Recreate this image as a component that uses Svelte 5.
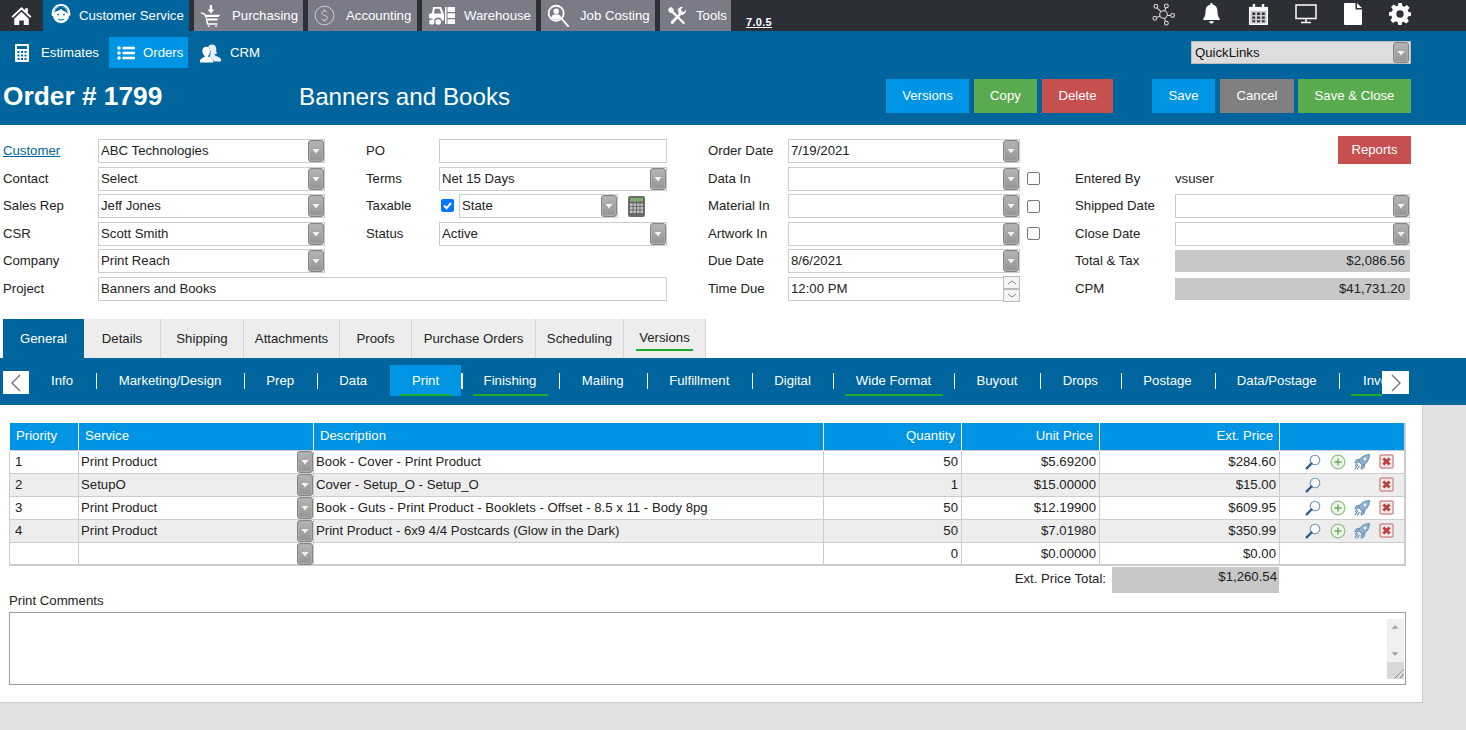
<script>
  const tabs = [
    { label: 'Purchasing', icon: 'cart', w: 109, iw: 32 },
    { label: 'Accounting', icon: 'dollar', w: 109, iw: 32 },
    { label: 'Warehouse', icon: 'fork', w: 114, iw: 36 },
    { label: 'Job Costing', icon: 'job', w: 114, iw: 33 },
    { label: 'Tools', icon: 'tools', w: 71, iw: 30 }
  ];
  const detailTabs = [
    { label: 'General', w: 81, active: true },
    { label: 'Details', w: 77 },
    { label: 'Shipping', w: 83 },
    { label: 'Attachments', w: 96 },
    { label: 'Proofs', w: 72 },
    { label: 'Purchase Orders', w: 124 },
    { label: 'Scheduling', w: 88 },
    { label: 'Versions', w: 82, mark: true }
  ];
  const subTabs = [
    { label: 'Info', w: 68 },
    { label: 'Marketing/Design', w: 148 },
    { label: 'Prep', w: 72.5 },
    { label: 'Data', w: 73.5 },
    { label: 'Print', w: 71, active: true, mark: true },
    { label: 'Finishing', w: 98, mark: true },
    { label: 'Mailing', w: 87.5 },
    { label: 'Fulfillment', w: 105.5 },
    { label: 'Digital', w: 81 },
    { label: 'Wide Format', w: 121, mark: true },
    { label: 'Buyout', w: 86 },
    { label: 'Drops', w: 80.5 },
    { label: 'Postage', w: 94 },
    { label: 'Data/Postage', w: 124.5 },
    { label: 'Invoice', w: 90, mark: true }
  ];
  const lines = [
    { p: '1', s: 'Print Product', d: 'Book - Cover - Print Product', q: '50', u: '$5.69200', e: '$284.60', add: true },
    { p: '2', s: 'SetupO', d: 'Cover - Setup_O - Setup_O', q: '1', u: '$15.00000', e: '$15.00', add: false },
    { p: '3', s: 'Print Product', d: 'Book - Guts - Print Product - Booklets - Offset - 8.5 x 11 - Body 8pg', q: '50', u: '$12.19900', e: '$609.95', add: true },
    { p: '4', s: 'Print Product', d: 'Print Product - 6x9 4/4 Postcards (Glow in the Dark)', q: '50', u: '$7.01980', e: '$350.99', add: true }
  ];
</script>

{#snippet arrow()}
  <span class="drop"><svg viewBox="0 0 8 6" width="8" height="6"><path d="M0.5 1h7L4 5.500z" fill="#f2f2f2" /></svg></span>
{/snippet}

{#snippet select(value, extra = '')}
  <div class="field {extra}"><span class="val">{value}</span>{@render arrow()}</div>
{/snippet}

{#snippet navIcon(name)}
  {#if name === 'cart'}
    <svg viewBox="0 0 24 24" width="22" height="22" fill="#fff"><path d="M10.700 0h2.400v5h2.600l-3.800 4.200L8.200 5h2.500z" /><path d="M1 8l3.600.6L6 10.500h16l-1.600 2.700H7l.5 1.400h12.200l-1.200 2.200H8.200L9 20h10v1.600H7.500L5.900 13 3.800 10 1 9.500z" /><circle cx="9.500" cy="23" r="1" /><circle cx="17.500" cy="23" r="1" /></svg>
  {:else if name === 'dollar'}
    <svg viewBox="0 0 22 22" width="21" height="21" fill="none" stroke="#ddd" stroke-width=".9"><circle cx="11" cy="11" r="9.800" /><path d="M14 7.600c-.8-1-1.800-1.400-3-1.400-1.700 0-3 .9-3 2.300 0 3.200 6.200 1.700 6.200 5 0 1.400-1.400 2.300-3.200 2.300-1.300 0-2.500-.5-3.200-1.500M11 4.500v1.700M11 15.800v1.700" /></svg>
  {:else if name === 'fork'}
    <svg viewBox="0 0 28 20" width="28" height="20" fill="#fff"><path d="M5 1h8l3 7v6.500h-2a4 4 0 0 0-7.800 0H5.500a3.500 3.500 0 0 0-4.500-2V8l3-1zm1.800 1.800L6 7.500h7.500l-2-4.700z" fill-rule="evenodd" /><circle cx="3.800" cy="16" r="2.600" /><circle cx="10.200" cy="16" r="2.800" /><path d="M17 1h1.500v17H17zM19.500 1H27v5h-7.500zm0 6.300H27V12h-7.500zm0 6H27V18h-7.500z" /></svg>
  {:else if name === 'job'}
    <svg viewBox="0 0 24 26" width="22" height="24"><circle cx="10" cy="10" r="8.200" fill="none" stroke="#fff" stroke-width="2" /><circle cx="10" cy="7.800" r="3" fill="#fff" /><path d="M4.500 15c.5-3 2.500-4 5.500-4s5 1 5.500 4c-1.500 1.500-3.500 2-5.500 2s-4-.5-5.500-2z" fill="#fff" /><path d="M16 16l7 8" stroke="#fff" stroke-width="2" stroke-linecap="round" /></svg>
  {:else}
    <svg viewBox="0 0 24 24" width="21" height="21" fill="#fff"><path d="M2 5.500 5.500 2 9 5l-.6 1.800 13 13.200c.8.800-.8 2.600-1.700 1.700L6.500 8.800 4.700 9.200z" /><path d="M13 6c1-2.500 4-4.500 6.500-4L17 5l1 2.500 2.500.5 2.500-2.500c.3 3-2.500 6.500-6 6l-9 9.800c-1.200 1.200-3.600-1-2.300-2.400l9-9c-.6-1-1-2-.7-3.900z" /></svg>
  {/if}
{/snippet}

{#snippet check()}
  <span class="tick"></span>
{/snippet}

<div class="page">
  <div class="top">
    <div class="home">
      <svg viewBox="0 0 24 22" width="23" height="20" fill="#fff"><path d="M12 1 1 11.500l1.500 1.500L12 4l9.500 9 1.500-1.500-4-3.800V2.500h-3v2.300z" /><path d="M4 14l8-7.600 8 7.600v7h-5.500v-5h-5v5H4z" /></svg>
    </div>
    <div class="tab current">
      <svg class="ico" viewBox="0 0 24 24" width="22" height="22"><circle cx="12" cy="12" r="9" fill="#fff" /><path d="M3 13C1.500 5.500 7 1 12 1s10.500 4.500 9 12" fill="none" stroke="#fff" stroke-width="2" /><path d="M4.500 11C5 7 9 8.500 12 5.500 14 8 18 8 19.500 11 19 4 14 3 12 3S5 4 4.500 11z" fill="#00659c" /><circle cx="8.800" cy="11.500" r="1" fill="#00659c" /><circle cx="15.200" cy="11.500" r="1" fill="#00659c" /><path d="M9 16.500c2 1.300 4 1.300 6 0" stroke="#00659c" stroke-width="1.300" fill="none" /></svg>
      <span>Customer Service</span>
    </div>
    {#each tabs as t}
      <div class="tab" style="width: {t.w}px">
        <span class="ico-wrap" style="width: {t.iw}px">{@render navIcon(t.icon)}</span>
        <span>{t.label}</span>
      </div>
    {/each}
    <span class="version">7.0.5</span>
    <div class="top-right">
      <svg viewBox="0 0 24 24" width="23" height="23" fill="none" stroke="#ddd" stroke-width="1.100"><circle cx="12" cy="12" r="4" /><circle cx="4" cy="3.500" r="2" /><circle cx="15" cy="3" r="2" /><circle cx="3" cy="16" r="2" /><circle cx="15" cy="21" r="2" /><circle cx="21.500" cy="13" r="2" /><path d="M5.300 5l4 4M14.500 5l-1.300 3.200M4.700 15l4-1.500M14 19l-1-3.200M19.500 13H16" /></svg>
      <svg viewBox="0 0 20 24" width="19" height="22" fill="#fff"><path d="M10 0c1 0 1.600.8 1.600 1.800 3.400.8 4.900 3.400 4.900 7 0 5 1.200 7 2.500 8.400v1.300H1v-1.300C2.300 15.800 3.500 13.800 3.500 8.800c0-3.600 1.500-6.200 4.900-7C8.400.8 9 0 10 0zM7.500 20h5c-.2 1.600-1.200 2.400-2.500 2.400S7.700 21.600 7.500 20z" /></svg>
      <svg viewBox="0 0 22 24" width="21" height="23"><path d="M1 4h20v19H1z" fill="#fff" /><path d="M5 1h2.500v5H5zM14.500 1H17v5h-2.500z" fill="#fff" /><path d="M2.500 8h17v13.500h-17z" fill="#2d2f36" opacity=".25" /><g fill="#2d2f36"><path d="M4.500 10h3v2.500h-3zM9.500 10h3v2.500h-3zM14.500 10h3v2.500h-3zM4.500 14h3v2.500h-3zM9.500 14h3v2.500h-3zM14.500 14h3v2.500h-3zM4.500 18h3v2h-3zM9.500 18h3v2h-3zM14.500 18h3v2h-3z" /></g></svg>
      <svg viewBox="0 0 22 20" width="22" height="20" fill="none" stroke="#fff"><path d="M1 1h20v13.500H1z" stroke-width="1.500" /><path d="M11 15v3M6 18.500h10" stroke-width="1.500" /></svg>
      <svg viewBox="0 0 18 22" width="18" height="22" fill="#fff"><path d="M1 0h10.500v6.500H18V21a1 1 0 0 1-1 1H1a1 1 0 0 1-1-1V1a1 1 0 0 1 1-1zM13 0l5 5h-5z" /></svg>
      <svg viewBox="0 0 24 24" width="22" height="22" fill="#fff"><path fill-rule="evenodd" d="M10 0h4l.6 3.300 2.200.9 2.800-1.900 2.800 2.800-1.900 2.800.9 2.200L24 10v4l-3.300.6-.9 2.200 1.900 2.800-2.800 2.800-2.800-1.900-2.200.9L14 24h-4l-.6-3.300-2.200-.9-2.800 1.900-2.800-2.800 1.900-2.800-.9-2.200L0 14v-4l3.300-.6.9-2.200-1.900-2.800 2.800-2.800 2.800 1.900 2.200-.9zM12 8a4 4 0 1 0 0 8 4 4 0 0 0 0-8z" /></svg>
    </div>
  </div>

  <div class="head">
    <div class="subnav">
      <div class="sub" style="width: 94px">
        <svg viewBox="0 0 14 18" width="14" height="18"><path d="M1 0h12a1 1 0 0 1 1 1v16a1 1 0 0 1-1 1H1a1 1 0 0 1-1-1V1a1 1 0 0 1 1-1z" fill="#fff" /><path d="M2 2h10v3H2z" fill="#00659c" /><g fill="#00659c"><path d="M2.500 7h2v2h-2zM6 7h2v2H6zM9.500 7h2v2h-2zM2.500 10.500h2v2h-2zM6 10.500h2v2H6zM9.500 10.500h2v2h-2zM2.500 14h2v2h-2zM6 14h2v2H6zM9.500 14h2v2h-2z" /></g></svg>
        <span>Estimates</span>
      </div>
      <div class="sub on">
        <svg viewBox="0 0 18 14" width="18" height="14" fill="#fff"><circle cx="2" cy="2" r="1.800" /><circle cx="2" cy="7" r="1.800" /><circle cx="2" cy="12" r="1.800" /><path d="M5.500.7H18v2.600H5.500zM5.500 5.700H18v2.600H5.500zM5.500 10.700H18v2.600H5.500z" /></svg>
        <span>Orders</span>
      </div>
      <div class="sub crm">
        <svg viewBox="0 0 22 19" width="21" height="19" fill="#fff"><path d="M12.500 0c3 0 4.500 2 4.500 5 0 1.500 0 3 1 4.500-1 .6-2 .8-2.800.8.200.800.500 1.200 1.300 1.600 2.500 1 4.500 2 5.500 3.500V18h-7c-.5-2-3-3.500-5.500-4.500.8-1 1.300-2.500 1.500-4 .3-2.500-.3-5-2.500-6.500C9 1 10.500 0 12.500 0z" opacity=".9" /><path d="M6.500 2.500c2.700 0 4 2 4 4.500 0 2-.8 4-2 5v1c2.500 1 4.500 2 5.500 3.500V19H0v-2.500C1 15 3 14 5 13v-1C3.500 11 2.500 9 2.500 7c0-2.500 1.300-4.500 4-4.500z" /></svg>
        <span>CRM</span>
      </div>
      <div class="quick"><span>QuickLinks</span>{@render arrow()}</div>
    </div>
    <div class="titlebar">
      <h1>Order # 1799</h1>
      <h2>Banners and Books</h2>
      <div class="btns">
        <button class="b blue" style="width: 83px">Versions</button>
        <button class="b green" style="width: 63px">Copy</button>
        <button class="b red" style="width: 71px">Delete</button>
        <button class="b blue" style="width: 63px; margin-left: 34px">Save</button>
        <button class="b gray" style="width: 74px; margin-right: -1px">Cancel</button>
        <button class="b green" style="width: 113px">Save &amp; Close</button>
      </div>
    </div>
  </div>

  <div class="form">
    <a class="lbl link" href="#top">Customer</a>
    {@render select('ABC Technologies')}
    <span class="lbl g1">PO</span>
    <div class="field"></div>
    <span class="lbl g1">Order Date</span>
    {@render select('7/19/2021')}
    <div class="reports"><button class="b red rep">Reports</button></div>

    <span class="lbl">Contact</span>
    {@render select('Select')}
    <span class="lbl g1">Terms</span>
    {@render select('Net 15 Days')}
    <span class="lbl g1">Data In</span>
    <div class="with-check">{@render select('')}{@render check()}</div>
    <span class="lbl g2">Entered By</span>
    <span class="plain">vsuser</span>

    <span class="lbl">Sales Rep</span>
    {@render select('Jeff Jones')}
    <span class="lbl g1">Taxable</span>
    <div class="taxable">
      <span class="checked"><svg viewBox="0 0 13 13" width="13" height="13"><path d="M3 6.500l2.500 2.700L10 4" fill="none" stroke="#fff" stroke-width="2" /></svg></span>
      {@render select('State')}
      <svg class="calc" viewBox="0 0 17 21" width="17" height="21"><rect width="17" height="21" rx="2" fill="#6a6a6a" /><rect x="2" y="2" width="13" height="3.500" fill="#7fb069" /><g fill="#c4c4c4"><path d="M2 7.500h2.500v2.500H2zM5.500 7.500H8v2.500H5.500zM9 7.500h2.500v2.500H9zM12.500 7.500H15v2.500h-2.500zM2 11h2.500v2.500H2zM5.500 11H8v2.500H5.500zM9 11h2.500v2.500H9zM12.500 11H15v2.500h-2.500zM2 14.500h2.500V17H2zM5.500 14.500H8V17H5.500zM9 14.500h2.500V17H9zM12.500 14.500H15V17h-2.500z" /></g></svg>
    </div>
    <span class="lbl g1">Material In</span>
    <div class="with-check">{@render select('')}{@render check()}</div>
    <span class="lbl g2">Shipped Date</span>
    {@render select('')}

    <span class="lbl">CSR</span>
    {@render select('Scott Smith')}
    <span class="lbl g1">Status</span>
    {@render select('Active')}
    <span class="lbl g1">Artwork In</span>
    <div class="with-check">{@render select('')}{@render check()}</div>
    <span class="lbl g2">Close Date</span>
    {@render select('')}

    <span class="lbl">Company</span>
    {@render select('Print Reach')}
    <span></span><span></span>
    <span class="lbl g1">Due Date</span>
    {@render select('8/6/2021')}
    <span class="lbl g2">Total &amp; Tax</span>
    <div class="total">$2,086.56</div>

    <span class="lbl">Project</span>
    <div class="field wide"><span class="val">Banners and Books</span></div>
    <span class="lbl g1">Time Due</span>
    <div class="field"><span class="val">12:00 PM</span>
      <span class="spin">
        <i><svg viewBox="0 0 12 7" width="12" height="7"><path d="M2 5l4-3 4 3" fill="none" stroke="#888" /></svg></i>
        <i><svg viewBox="0 0 12 7" width="12" height="7"><path d="M2 2l4 3 4-3" fill="none" stroke="#888" /></svg></i>
      </span>
    </div>
    <span class="lbl g2">CPM</span>
    <div class="total">$41,731.20</div>
  </div>

  <div class="tabs">
    {#each detailTabs as t}
      <div class="dt" class:active={t.active} style="width: {t.w}px">
        <span class:marked={t.mark}>{t.label}</span>
      </div>
    {/each}
  </div>

  <div class="subtabs">
    <div class="pager left"><svg viewBox="0 0 14 20" width="14" height="20"><path d="M11 2 3 10l8 8" fill="none" stroke="#777" stroke-width="1.400" /></svg></div>
    <div class="strip">
      {#each subTabs as t, i}
        <div class="st" class:active={t.active} class:first={i === 0} style="width: {t.w}px">
          <span>{t.label}</span>
          {#if t.mark}<em></em>{/if}
        </div>
      {/each}
    </div>
    <div class="pager right"><svg viewBox="0 0 14 20" width="14" height="20"><path d="M3 2l8 8-8 8" fill="none" stroke="#777" stroke-width="1.400" /></svg></div>
  </div>

  <div class="body">
    <div class="sheet">
      <table>
        <colgroup>
          <col style="width: 69px" /><col style="width: 235px" /><col style="width: 510px" />
          <col style="width: 138px" /><col style="width: 138px" /><col style="width: 180px" /><col style="width: 125px" />
        </colgroup>
        <thead>
          <tr>
            <th>Priority</th><th>Service</th><th>Description</th>
            <th class="r">Quantity</th><th class="r">Unit Price</th><th class="r">Ext. Price</th><th></th>
          </tr>
        </thead>
        <tbody>
          {#each lines as l, i}
            <tr class:alt={i % 2 === 1}>
              <td class="pri">{l.p}</td>
              <td class="svc">{l.s}{@render arrow()}</td>
              <td class="desc">{l.d}</td>
              <td class="r">{l.q}</td>
              <td class="r">{l.u}</td>
              <td class="r">{l.e}</td>
              <td class="acts">
                <div class="act-row">
                  <svg viewBox="0 0 16 16" width="16" height="16"><circle cx="10" cy="6" r="4.800" fill="#fff" stroke="#6d93b8" stroke-width="1.100" /><path d="M6.500 9.500 1.700 14.300" stroke="#2f5f8a" stroke-width="2.400" stroke-linecap="round" /></svg>
                  {#if l.add}
                    <svg viewBox="0 0 16 16" width="16" height="16"><circle cx="8" cy="8" r="6.900" fill="#eef6ea" stroke="#94c08a" stroke-width="1.300" /><path d="M8 4.500v7M4.500 8h7" stroke="#6aa85f" stroke-width="1.400" /></svg>
                    <svg viewBox="0 0 16 16" width="16" height="16"><path d="M15.500.5C10.500.8 6.500 3 4.500 7.500l4 4C13 9.500 15.200 5.500 15.500.5z" fill="#8fb0cf" stroke="#4f7aa3" stroke-width=".8" /><path d="M5.500 5 2 6 .7 9l3.300-.2zM11 10.500 10 14l-3 1.300.2-3.300z" fill="#8fb0cf" stroke="#4f7aa3" stroke-width=".6" /><path d="M4 10.500 1 15M5.500 12 3 15.500M3 9.500l-2 2.500" stroke="#5b84ab" stroke-width="1.100" /><circle cx="11" cy="5" r="1.400" fill="#eaf1f8" /></svg>
                  {:else}
                    <span class="blank"></span><span class="blank"></span>
                  {/if}
                  <svg class="del" viewBox="0 0 16 16" width="15" height="15"><rect x="1" y="1" width="14" height="14" rx="1.500" fill="#f4e6e6" stroke="#cf8f8f" stroke-width="1.500" /><path d="M4.700 4.700l6.600 6.600M11.300 4.700l-6.600 6.600" stroke="#b93f3d" stroke-width="3" /></svg>
                </div>
              </td>
            </tr>
          {/each}
          <tr class="new">
            <td></td>
            <td class="svc">{@render arrow()}</td>
            <td></td>
            <td class="r">0</td>
            <td class="r">$0.00000</td>
            <td class="r">$0.00</td>
            <td></td>
          </tr>
        </tbody>
      </table>
      <div class="sum">
        <span>Ext. Price Total:</span>
        <div class="sum-val">$1,260.54</div>
      </div>
      <div class="cm-label">Print Comments</div>
      <div class="comments">
        <div class="bar">
          <svg viewBox="0 0 16 48" width="16" height="43"><path d="M4 11l4-4 4 4z" fill="#a3a3a3" /><path d="M4 37h8l-4 4z" fill="#a3a3a3" /></svg>
          <div class="grip"><svg viewBox="0 0 18 17" width="18" height="17"><path d="M8 16 17 7M13 16l4-4" stroke="#444" stroke-width=".8" stroke-dasharray="1 .6" /></svg></div>
        </div>
      </div>
    </div>
  </div>
</div>

<style>
  :global(body) {
    margin: 0;
    background: #e2e2e2;
  }

  .page {
    width: 1466px;
    height: 730px;
    overflow: hidden;
    font: 13.2px/1.2 "Liberation Sans", Arial, sans-serif;
    color: #222;
  }

  .top {
    height: 31px;
    display: flex;
    gap: 5px;
    background: #2d2f36;
  }

  .home {
    width: 43px;
    margin-right: -5px;
    display: grid;
    place-items: center;
  }

  .tab {
    display: flex;
    align-items: center;
    height: 31px;
    box-sizing: border-box;
    padding: 1px 0 0 6px;
    color: #fff;
    background: #7a7b87;
    white-space: nowrap;
  }

  .ico-wrap {
    flex: none;
    display: flex;
    justify-content: flex-start;
    margin-top: -1px;
  }

  .tab.current {
    width: 146px;
    padding-left: 7px;
    background: #00659c;
  }

  .tab.current .ico {
    margin-right: 7px;
    margin-top: -2px;
  }

  .version {
    align-self: flex-end;
    margin: 0 0 2px 10px;
    color: #fff;
    font-size: 11px;
    font-weight: 700;
    text-decoration: underline;
    letter-spacing: 0.3px;
  }

  .top-right {
    margin-left: auto;
    padding-right: 55px;
    width: 314px;
    box-sizing: border-box;
    display: flex;
    align-items: center;
    justify-content: space-between;
    padding-bottom: 3px;
  }

  .head {
    height: 94px;
    background: #00659c;
  }

  .subnav {
    display: flex;
    height: 31px;
    padding: 6px 0 0 15px;
  }

  .sub {
    display: flex;
    align-items: center;
    gap: 12px;
    padding-top: 1px;
    color: #fff;
  }

  .sub.on {
    width: 79px;
    box-sizing: border-box;
    padding-left: 8px;
    gap: 8px;
    background: #0094e4;
  }

  .sub.crm {
    padding-left: 12px;
    gap: 9px;
  }

  .quick {
    width: 220px;
    height: 23px;
    margin: 4px 55px 0 auto;
    box-sizing: border-box;
    display: flex;
    align-items: center;
    justify-content: space-between;
    padding: 0 1px 0 3px;
    color: #111;
    background: #ddd;
    border: 1px solid #bbb;
  }

  .quick .drop {
    height: 21px;
  }

  .titlebar {
    display: flex;
    align-items: center;
    height: 34px;
    margin-top: 11px;
    padding-left: 3px;
  }

  h1 {
    width: 296px;
    margin: 2px 0 0;
    color: #fff;
    font-size: 26.3px;
    font-weight: 700;
  }

  h2 {
    margin: 2px 0 0;
    color: #fff;
    font-size: 24.2px;
    font-weight: 400;
  }

  .btns {
    margin-left: auto;
    margin-right: 55px;
    display: flex;
    gap: 5px;
  }

  .b {
    height: 34px;
    border: 0;
    padding: 0;
    color: #fff;
    font: inherit;
  }

  .blue { background: #0094e4; }
  .green { background: #5aab4f; }
  .red { background: #c5504f; }
  .gray { background: #808080; }

  .form {
    display: grid;
    grid-template-columns: 95px 227px 114px 228px 121px 232px 155px 235px;
    grid-auto-rows: 27.5px;
    align-items: center;
    height: 194px;
    box-sizing: border-box;
    padding: 12.4px 0 0 3px;
    background: #fff;
  }

  .lbl {
    color: #222;
  }

  .g1 {
    padding-left: 41px;
  }

  .g2 {
    padding-left: 55px;
  }

  .link {
    color: #00659c;
    text-decoration: underline;
  }

  .field {
    position: relative;
    height: 24px;
    box-sizing: border-box;
    display: flex;
    align-items: center;
    justify-content: space-between;
    padding: 0 0 0 2px;
    border: 1px solid #ccc;
    background: #fff;
    color: #222;
  }

  .val {
    white-space: nowrap;
  }

  .wide {
    grid-column: span 3;
  }

  .drop {
    flex: none;
    width: 16px;
    height: 22px;
    display: grid;
    place-items: center;
    border-radius: 3px;
    border: 1px solid #858585;
    box-sizing: border-box;
    background: linear-gradient(#b5b5b5, #949494);
    box-shadow: inset 0 0 0 1px #adadad;
  }

  .with-check {
    display: flex;
    align-items: center;
    width: 232px;
  }

  .with-check .field {
    width: 232px;
    flex: none;
  }

  .tick {
    flex: none;
    width: 13px;
    height: 13px;
    margin-left: 7px;
    box-sizing: border-box;
    border: 1px solid #777;
    border-radius: 2px;
    background: #fff;
  }

  .taxable {
    display: flex;
    align-items: center;
  }

  .checked {
    width: 13px;
    height: 13px;
    flex: none;
    margin: -2px 5px 0 2px;
    border-radius: 2px;
    background: #0075ff;
  }

  .checked svg {
    display: block;
  }

  .taxable .field {
    width: 159px;
    flex: none;
  }

  .calc {
    margin-left: 10px;
    flex: none;
  }

  .reports {
    grid-column: 7 / span 2;
    display: flex;
    justify-content: flex-end;
  }

  .rep {
    width: 73px;
    height: 28px;
    margin: 0 -1px 2px 0;
  }

  .total {
    height: 22px;
    line-height: 21px;
    text-align: right;
    padding-right: 5px;
    background: #c8c8c8;
  }

  .spin {
    display: flex;
    flex-direction: column;
    height: 26px;
    margin: -3px -1px;
  }

  .spin i {
    width: 17px;
    height: 13px;
    box-sizing: border-box;
    border: 1px solid #bbb;
    display: grid;
    place-items: center;
    background: #f4f4f4;
  }

  .tabs {
    display: flex;
    height: 39px;
    padding-left: 3px;
    background: #fff;
  }

  .dt {
    display: flex;
    align-items: center;
    justify-content: center;
    box-sizing: border-box;
    background: #ededed;
    border-right: 1px solid #d4d4d4;
  }

  .dt.active {
    color: #fff;
    background: #00659c;
    border: 0;
  }

  .marked {
    padding: 4px 3px;
    border-bottom: 2px solid #1aad27;
  }

  .subtabs {
    position: relative;
    height: 47px;
    background: #00659c;
  }

  .strip {
    position: absolute;
    left: 28px;
    top: 7px;
    width: 1354px;
    height: 31px;
    display: flex;
    overflow: hidden;
  }

  .st {
    position: relative;
    flex: none;
    box-sizing: border-box;
    display: flex;
    align-items: center;
    justify-content: center;
    color: #fff;
    white-space: nowrap;
  }

  .st::before {
    content: '';
    position: absolute;
    left: 0;
    top: 8px;
    width: 1px;
    height: 16px;
    background: #fff;
  }

  .st.first::before,
  .st.active::before {
    display: none;
  }

  .st.active {
    background: #0094e4;
  }

  .st.active + .st::before {
    width: 2px;
  }

  .st em {
    position: absolute;
    left: 12px;
    right: 11px;
    bottom: 0;
    height: 2px;
    background: #1aad27;
  }

  .st.active em {
    left: 10px;
    right: 10px;
  }

  .pager {
    position: absolute;
    top: 13px;
    width: 26px;
    height: 23px;
    display: grid;
    place-items: center;
    background: #fff;
  }

  .pager.left {
    left: 3px;
  }

  .pager.right {
    left: 1382px;
    width: 27px;
  }

  .body {
    height: 325px;
    width: 1423px;
    background: #e2e2e2;
  }

  .sheet {
    height: 298px;
    box-sizing: border-box;
    padding: 18px 0 0 9px;
    border-right: 1px solid #ccc;
    border-bottom: 1px solid #ccc;
    background: #fff;
  }

  table {
    width: 1395px;
    table-layout: fixed;
    border-collapse: collapse;
    border-right: 2px solid #ccc;
    border-bottom: 2px solid #ccc;
  }

  th {
    height: 27px;
    padding: 0 6px 1px;
    box-sizing: border-box;
    text-align: left;
    font-weight: 400;
    color: #fff;
    background: #0094e4;
    border-left: 1px solid #fff;
  }

  td {
    height: 23px;
    padding: 0 5px;
    box-sizing: border-box;
    border: 1px solid #ccc;
    white-space: nowrap;
  }

  .alt td {
    background: #ededed;
  }

  .new td {
    padding-top: 2px;
  }

  th.r,
  td.r {
    text-align: right;
  }

  td.r {
    padding-right: 3px;
  }

  th.r {
    padding-right: 6px;
  }

  td.svc {
    position: relative;
    padding-left: 2px;
  }

  td.svc .drop {
    position: absolute;
    right: 0;
    top: 0;
  }

  td.desc {
    padding-left: 2px;
  }

  td.acts {
    padding: 0 0 0 25px;
  }

  .act-row {
    display: flex;
    align-items: center;
    gap: 8.5px;
  }

  .act-row svg,
  .blank {
    flex: none;
    display: block;
  }

  .blank {
    width: 16px;
    height: 16px;
  }

  .sum {
    width: 1270px;
    margin-top: 1px;
    display: flex;
    justify-content: flex-end;
    align-items: flex-start;
    gap: 6px;
  }

  .sum span {
    padding-top: 4px;
  }

  .sum-val {
    width: 167px;
    height: 26px;
    box-sizing: border-box;
    padding: 2px 2px 0 0;
    text-align: right;
    background: #c8c8c8;
  }

  .cm-label {
    line-height: 15px;
    padding-bottom: 4px;
  }

  .comments {
    position: relative;
    width: 1397px;
    height: 73px;
    box-sizing: border-box;
    border: 1px solid #a0a0a0;
  }

  .bar {
    position: absolute;
    right: 1px;
    top: 6px;
    width: 17px;
    height: 60px;
    background: #f0f0f0;
  }

  .bar svg {
    display: block;
  }

  .grip {
    height: 17px;
    background: #d8d8d8;
  }
</style>
